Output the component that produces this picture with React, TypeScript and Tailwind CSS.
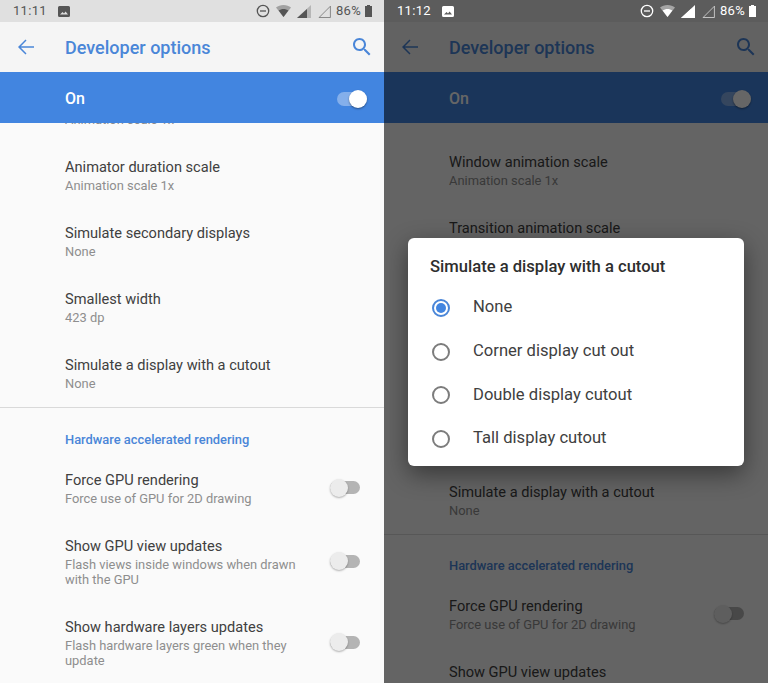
import React from "react";

type Row = { title: string; sub: string[]; toggle?: boolean };

const leftRows: Row[] = [
  { title: "Transition animation scale", sub: ["Animation scale 1x"] },
  { title: "Animator duration scale", sub: ["Animation scale 1x"] },
  { title: "Simulate secondary displays", sub: ["None"] },
  { title: "Smallest width", sub: ["423 dp"] },
  { title: "Simulate a display with a cutout", sub: ["None"] },
];

const leftHardware: Row[] = [
  { title: "Force GPU rendering", sub: ["Force use of GPU for 2D drawing"], toggle: true },
  { title: "Show GPU view updates", sub: ["Flash views inside windows when drawn", "with the GPU"], toggle: true },
  { title: "Show hardware layers updates", sub: ["Flash hardware layers green when they", "update"], toggle: true },
];

const rightRows: Row[] = [
  { title: "Window animation scale", sub: ["Animation scale 1x"] },
  { title: "Transition animation scale", sub: ["Animation scale 1x"] },
  { title: "Animator duration scale", sub: ["Animation scale 1x"] },
  { title: "Simulate secondary displays", sub: ["None"] },
  { title: "Smallest width", sub: ["423 dp"] },
  { title: "Simulate a display with a cutout", sub: ["None"] },
];

// the last row is cut by the bottom of the screen, only its title shows
const rightHardware: Row[] = [
  { title: "Force GPU rendering", sub: ["Force use of GPU for 2D drawing"], toggle: true },
  { title: "Show GPU view updates", sub: [] },
];

const options = ["None", "Corner display cut out", "Double display cutout", "Tall display cutout"];

function StatusBar({ time, dark }: { time: string; dark?: boolean }) {
  const color = dark ? "text-white bg-[#5c5c5c]" : "text-[#555555] bg-[#e0e0e0]";
  return (
    <div className={`relative z-10 flex h-[22px] shrink-0 items-center pl-[13px] pr-[12px] text-[13px] tracking-[0.3px] ${color}`}>
      <span className="w-[45px]">{time}</span>
      <svg width="12" height="11" viewBox="0 0 12 11" fill="currentColor">
        <path d="M1.5 0h9A1.5 1.5 0 0 1 12 1.5v8a1.5 1.5 0 0 1-1.5 1.5h-9A1.5 1.5 0 0 1 0 9.5v-8A1.5 1.5 0 0 1 1.5 0zM2 8.5h8L7.6 5.6 6 7.4 4.6 6z" fillRule="evenodd" />
      </svg>
      <div className="flex-1" />
      <svg width="14" height="14" viewBox="0 0 14 14" fill="none" stroke="currentColor" strokeWidth="1.3">
        <circle cx="7" cy="7" r="5.7" />
        <path d="M4 7h6" />
      </svg>
      <svg className="ml-[6px]" width="15" height="12" viewBox="0 0 15 12" fill="currentColor">
        <path d="M0 2.5C2 .9 4.6 0 7.5 0S13 .9 15 2.5L7.5 12z" fillOpacity="0.45" />
        <path d="M2.6 5.6C4 4.6 5.7 4 7.5 4s3.5.6 4.9 1.6L7.5 12z" />
      </svg>
      <svg className="ml-[6px]" width="14" height="13" viewBox="0 0 14 13" fill="currentColor">
        <path d="M14 0v13H0z" fillOpacity={dark ? 1 : 0.3} />
        <path d="M10 4v9H0z" />
      </svg>
      <svg className="ml-[7px]" width="13" height="13" viewBox="0 0 13 13" fill="none" stroke="currentColor" strokeWidth="0.9" strokeOpacity="0.7">
        <path d="M12.4 1.2v11.3H1.1z" />
      </svg>
      <span className="ml-[5px] w-[28px]">86%</span>
      <svg className="ml-[1px]" width="7" height="12" viewBox="0 0 7 12" fill="currentColor">
        <path d="M2 0h3v1h2v11H0V1h2z" />
      </svg>
    </div>
  );
}

function Toggle({ on }: { on?: boolean }) {
  if (on) {
    return (
      <div className="relative h-[14px] w-[30px] rounded-full bg-white/35">
        <div className="absolute right-0 top-[-2px] h-[18px] w-[18px] rounded-full bg-white shadow-[0_1px_2px_rgba(0,0,0,0.4)]" />
      </div>
    );
  }
  return (
    <div className="relative h-[13px] w-[30px] rounded-full bg-[#b4b4b4]">
      <div className="absolute left-0 top-[-2.5px] h-[18px] w-[18px] rounded-full bg-[#ececec] shadow-[0_1px_2px_rgba(0,0,0,0.3)]" />
    </div>
  );
}

function SettingRow({ row }: { row: Row }) {
  return (
    <div className="flex shrink-0 items-center justify-between py-[15px] pl-[65px] pr-[24px]">
      <div>
        <div className="text-[14.6px] leading-[20px] text-[#404040]">{row.title}</div>
        <div className="mt-[1px] text-[12.9px] leading-[15px] text-[#8e8e8e]">
          {row.sub.map((line) => (
            <div key={line}>{line}</div>
          ))}
        </div>
      </div>
      {row.toggle && <Toggle />}
    </div>
  );
}

function Radio({ on }: { on?: boolean }) {
  if (on) {
    return (
      <div className="ml-[1.5px] flex h-[18px] w-[18px] items-center justify-center rounded-full border-2 border-[#4a86d8]">
        <div className="h-[10px] w-[10px] rounded-full bg-[#4285e0]" />
      </div>
    );
  }
  return <div className="ml-[1.5px] h-[18px] w-[18px] rounded-full border-2 border-[#7c7c7c]" />;
}

function Phone({ time, rows, hardware, listClass, headerClass, dialog }: { time: string; rows: Row[]; hardware: Row[]; listClass: string; headerClass: string; dialog?: boolean }) {
  return (
    <div className="relative flex h-[683px] w-[384px] flex-col overflow-hidden bg-[#fafafa]">
      <StatusBar time={time} dark={dialog} />
      <div className="flex h-[50px] shrink-0 items-center bg-[#f5f5f5] text-[#4a86d8]">
        <div className="flex w-[65px] pl-[14px]">
          <svg width="24" height="24" viewBox="0 0 24 24" fill="currentColor">
            <path d="M20 11.2H6.9l5.6-5.6-1-1L4 12l7.5 7.4 1-1-5.6-5.6H20z" />
          </svg>
        </div>
        <span className="flex-1 text-[18px] font-medium">Developer options</span>
        <svg className="mr-[10px]" width="24" height="24" viewBox="0 0 24 24" fill="currentColor">
          <path d="M15.5 14h-.79l-.28-.27C15.41 12.59 16 11.11 16 9.5 16 5.91 13.09 3 9.5 3S3 5.91 3 9.5 5.91 16 9.5 16c1.61 0 3.09-.59 4.23-1.57l.27.28v.79l5 4.99L20.49 19l-4.99-5zm-6 0C7.01 14 5 11.99 5 9.5S7.01 5 9.5 5 14 7.01 14 9.5 11.99 14 9.5 14z" />
        </svg>
      </div>
      <div className="relative z-[1] flex h-[51px] shrink-0 items-center justify-between bg-[#4285e0] pl-[65px] pr-[17px] pt-[2px]">
        <span className="text-[16px] font-medium text-white">On</span>
        <Toggle on />
      </div>
      <div className={`flex flex-col ${listClass}`}>
        {rows.map((row) => (
          <SettingRow key={row.title} row={row} />
        ))}
        <div className={`mt-[1px] shrink-0 border-t border-[#d9d9d9] pl-[65px] text-[12.9px] font-medium leading-[16px] text-[#4a86d8] ${headerClass}`}>
          Hardware accelerated rendering
        </div>
        {hardware.map((row) => (
          <SettingRow key={row.title} row={row} />
        ))}
      </div>
      {dialog && (
        <>
          <div className="absolute inset-0 z-[2] bg-black/60" />
          <div className="absolute left-[24px] top-[238px] z-[3] h-[228px] w-[336px] rounded-[6px] bg-white pl-[22px] pt-[19px] shadow-[0_8px_24px_rgba(0,0,0,0.45)]">
            <div className="text-[16.6px] font-medium leading-[20px] text-[#2e2e2e]">Simulate a display with a cutout</div>
            <div className="mt-[9px] flex flex-col">
              {options.map((opt, i) => (
                <div key={opt} className="flex h-[43.7px] items-center">
                  <Radio on={i === 0} />
                  <span className="ml-[23.5px] text-[16.6px] text-[#404040]">{opt}</span>
                </div>
              ))}
            </div>
          </div>
        </>
      )}
    </div>
  );
}

export default function App() {
  return (
    <div className="flex h-[683px] w-[768px] overflow-hidden font-['Roboto',sans-serif]">
      <Phone time="11:11" rows={leftRows} hardware={leftHardware} listClass="-mt-[47px]" headerClass="pt-[24px] pb-[6.5px]" />
      <Phone time="11:12" rows={rightRows} hardware={rightHardware} listClass="mt-[14px]" headerClass="pt-[23px] pb-[6.5px]" dialog />
    </div>
  );
}
